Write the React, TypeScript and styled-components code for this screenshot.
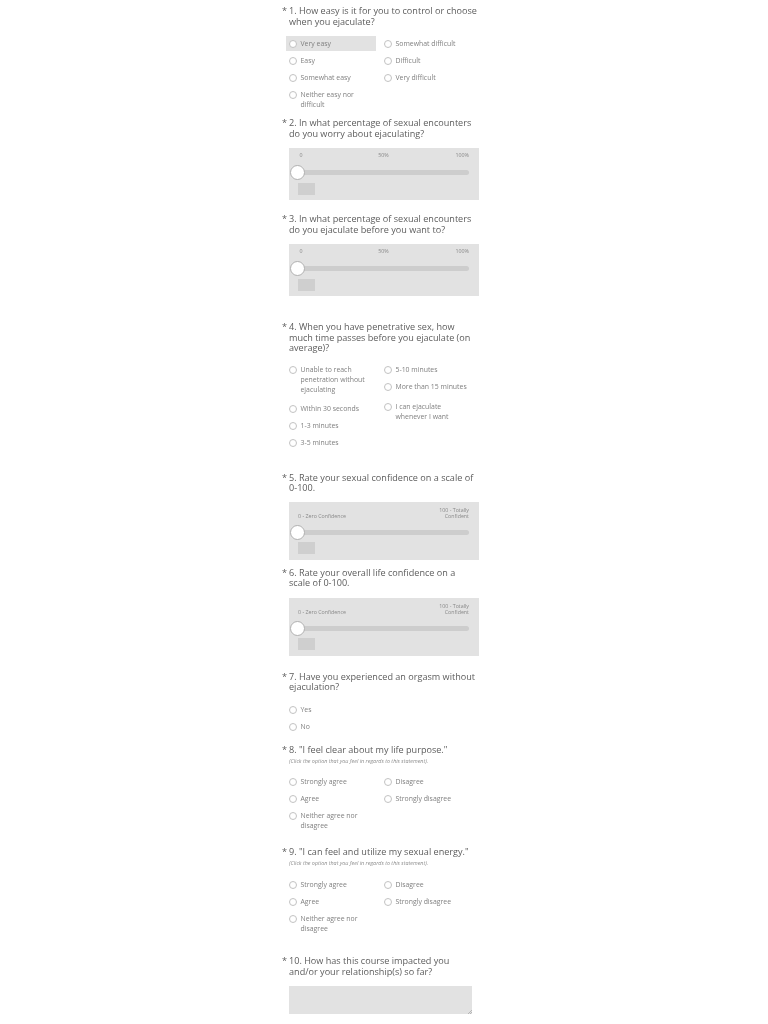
import React from 'react';
import styled, { createGlobalStyle } from 'styled-components';

const GlobalStyle = createGlobalStyle`
  html, body {
    margin: 0;
    padding: 0;
    background: #fff;
  }
  body {
    font-family: 'Open Sans', 'Liberation Sans', sans-serif;
  }
`;

const Page = styled.div`
  width: 200px;
  height: 1024px;
  margin-left: 282px;
  overflow: hidden;
  filter: blur(0.35px);
`;

const Question = styled.section<{ $top: number }>`
  margin-top: ${(p) => p.$top}px;
`;

const Title = styled.h2<{ $after?: number }>`
  display: flex;
  margin: 0 0 ${(p) => p.$after ?? 9}px;
  padding-top: 1px;
  font-size: 9.1px;
  font-weight: 400;
  line-height: 10.5px;
  color: #5c5c5c;
`;

const Star = styled.span`
  flex: 0 0 7px;
`;

const TitleText = styled.span`
  max-width: 189.5px;
`;

const Note = styled.p<{ $top?: number }>`
  margin: ${(p) => p.$top ?? 4}px 0 11px 7px;
  height: 5px;
  font-size: 5.4px;
  font-style: italic;
  line-height: 5px;
  color: #8c8c8c;
  white-space: nowrap;
`;

const Options = styled.div`
  display: flex;
  margin-left: 4px;
`;

const Column = styled.div`
  display: flex;
  flex-direction: column;
  gap: 2px;
  width: 95px;
`;

const Option = styled.label<{ $selected?: boolean; $offset?: number }>`
  display: flex;
  align-items: flex-start;
  gap: 3.5px;
  width: 90px;
  margin-top: ${(p) => p.$offset ?? 0}px;
  padding: 2.5px 3px 2.5px 3px;
  box-sizing: border-box;
  background: ${(p) => (p.$selected ? '#e2e2e2' : 'transparent')};
  font-size: 6.9px;
  line-height: 10px;
  color: #808080;
`;

const Radio = styled.span`
  flex: 0 0 8px;
  height: 8px;
  margin-top: 1px;
  box-sizing: border-box;
  border: 1px solid #c2c2c2;
  border-radius: 50%;
  background: #fff;
`;

const SliderPanel = styled.div<{ $tall?: boolean }>`
  width: 190px;
  height: ${(p) => (p.$tall ? 58 : 52)}px;
  margin-left: 7px;
  padding: 4px 10px 0 9px;
  box-sizing: border-box;
  background: #e2e2e2;
`;

const Scale = styled.div<{ $tall?: boolean }>`
  display: flex;
  justify-content: space-between;
  align-items: flex-end;
  height: ${(p) => (p.$tall ? 14 : 6)}px;
  font-size: 5.3px;
  line-height: 6.5px;
  color: #888;
`;

const ScaleCell = styled.span<{ $align: 'left' | 'center' | 'right' }>`
  flex: 1;
  text-align: ${(p) => p.$align};
`;

const Track = styled.div<{ $tall?: boolean }>`
  position: relative;
  height: 5px;
  margin-top: ${(p) => (p.$tall ? 10.5 : 11.5)}px;
  border-radius: 3px;
  background: #cdcdcd;
`;

const Thumb = styled.span`
  position: absolute;
  left: -8px;
  top: -5px;
  width: 15px;
  height: 15px;
  box-sizing: border-box;
  border: 1px solid #b0b0b0;
  border-radius: 50%;
  background: #fff;
`;

const ValueBox = styled.div<{ $tall?: boolean }>`
  width: 17px;
  height: 12px;
  margin-top: ${(p) => (p.$tall ? 7 : 8)}px;
  background: #cfcfcf;
`;

const AnswerWrap = styled.div`
  position: relative;
  width: 183px;
  height: 28px;
  margin-left: 7px;
`;

const Answer = styled.textarea`
  display: block;
  width: 100%;
  height: 100%;
  margin: 0;
  padding: 0;
  box-sizing: border-box;
  border: 0;
  border-radius: 0;
  outline: 0;
  resize: none;
  background: #e2e2e2;
`;

const Grip = styled.svg`
  position: absolute;
  right: 0;
  bottom: 0;
  width: 4px;
  height: 4px;
`;

type Opt = string | { text: string; selected?: boolean; offset?: number };

const Choices = ({ left, right }: { left: Opt[]; right: Opt[] }) => (
  <Options>
    {[left, right].map((col, i) => (
      <Column key={i}>
        {col.map((o, j) => {
          const opt = typeof o === 'string' ? { text: o } : o;
          return (
            <Option key={j} $selected={opt.selected} $offset={opt.offset}>
              <Radio />
              <span>{opt.text}</span>
            </Option>
          );
        })}
      </Column>
    ))}
  </Options>
);

const Slider = ({ confidence }: { confidence?: boolean }) => (
  <SliderPanel $tall={confidence}>
    <Scale $tall={confidence}>
      {confidence ? (
        <>
          <ScaleCell $align="left">0 - Zero Confidence</ScaleCell>
          <ScaleCell $align="right">
            100 - Totally
            <br />
            Confident
          </ScaleCell>
        </>
      ) : (
        <>
          <ScaleCell $align="left">&nbsp;0</ScaleCell>
          <ScaleCell $align="center">50%</ScaleCell>
          <ScaleCell $align="right">100%</ScaleCell>
        </>
      )}
    </Scale>
    <Track $tall={confidence}>
      <Thumb />
    </Track>
    <ValueBox $tall={confidence} />
  </SliderPanel>
);

const Head = ({ children, after }: { children: React.ReactNode; after?: number }) => (
  <Title $after={after}>
    <Star>*</Star>
    <TitleText>{children}</TitleText>
  </Title>
);

const agree = {
  left: ['Strongly agree', 'Agree', 'Neither agree nor disagree'],
  right: ['Disagree', 'Strongly disagree'],
};

export default function App() {
  return (
    <>
      <GlobalStyle />
      <Page>
        <Question $top={5}>
          <Head>1. How easy is it for you to control or choose when you ejaculate?</Head>
          <Choices
            left={[{ text: 'Very easy', selected: true }, 'Easy', 'Somewhat easy', 'Neither easy nor difficult']}
            right={['Somewhat difficult', 'Difficult', 'Very difficult']}
          />
        </Question>
        <Question $top={5}>
          <Head>2. In what percentage of sexual encounters do you worry about ejaculating?</Head>
          <Slider />
        </Question>
        <Question $top={13}>
          <Head>3. In what percentage of sexual encounters do you ejaculate before you want to?</Head>
          <Slider />
        </Question>
        <Question $top={25}>
          <Head after={8.5}>4. When you have penetrative sex, how much time passes before you ejaculate (on average)?</Head>
          <Choices
            left={[
              'Unable to reach penetration without ejaculating',
              { text: 'Within 30 seconds', offset: 2 },
              '1-3 minutes',
              '3-5 minutes',
            ]}
            right={['5-10 minutes', 'More than 15 minutes', { text: 'I can ejaculate whenever I want', offset: 3 }]}
          />
        </Question>
        <Question $top={21.5}>
          <Head after={8}>5. Rate your sexual confidence on a scale of 0-100.</Head>
          <Slider confidence />
        </Question>
        <Question $top={7}>
          <Head>6. Rate your overall life confidence on a scale of 0-100.</Head>
          <Slider confidence />
        </Question>
        <Question $top={15}>
          <Head after={10}>7. Have you experienced an orgasm without ejaculation?</Head>
          <Choices left={['Yes', 'No']} right={[]} />
        </Question>
        <Question $top={9.5}>
          <Head after={-1}>8. "I feel clear about my life purpose."</Head>
          <Note>(Click the option that you feel in regards to this statement).</Note>
          <Choices {...agree} />
        </Question>
        <Question $top={12}>
          <Head after={-1}>9. "I can feel and utilize my sexual energy."</Head>
          <Note $top={5}>(Click the option that you feel in regards to this statement).</Note>
          <Choices {...agree} />
        </Question>
        <Question $top={19}>
          <Head>10. How has this course impacted you and/or your relationship(s) so far?</Head>
          <AnswerWrap>
            <Answer />
            <Grip viewBox="0 0 4 4">
              <path d="M4 0 L0 4 M4 2 L2 4" stroke="#999" strokeWidth="0.6" />
            </Grip>
          </AnswerWrap>
        </Question>
      </Page>
    </>
  );
}
